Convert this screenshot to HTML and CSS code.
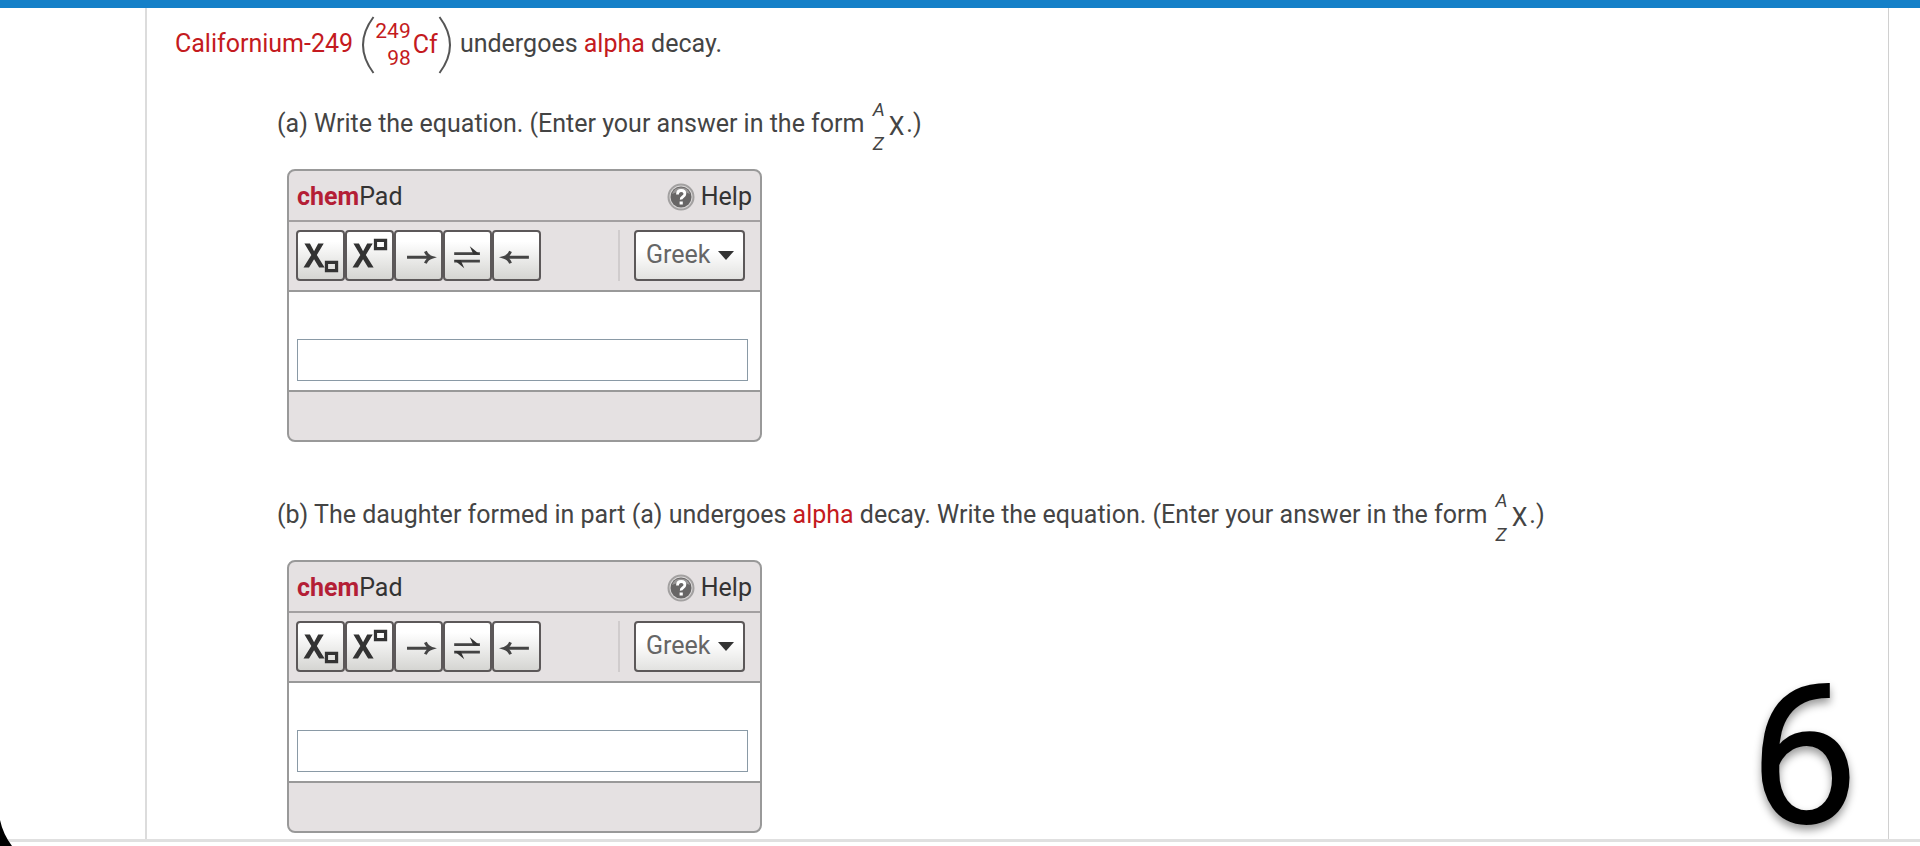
FILE: index.html
```html
<!DOCTYPE html>
<html lang="en">
<head>
    <meta charset="UTF-8">
    <meta name="viewport" content="width=device-width, initial-scale=1.0">
    <title>Californium-249 decay</title>
    <link rel="stylesheet" href="styles.css">
</head>
<body>
    <!-- Shared button icons -->
    <svg class="symbols" aria-hidden="true">
        <symbol id="icon-sub" viewBox="0 0 49 50">
            <path d="M7 12h6l4.500 8.500L22 12h6l-7.500 12.500L29 38h-6l-5.500-9-5.500 9H6l8.500-13.500z" />
            <path d="M31 32.500h11v9h-11z" fill="none" stroke="#333" stroke-width="3.500" />
        </symbol>
        <symbol id="icon-sup" viewBox="0 0 49 50">
            <path d="M7 12h6l4.500 8.500L22 12h6l-7.500 12.500L29 38h-6l-5.500-9-5.500 9H6l8.500-13.500z" />
            <path d="M31 8.500h11v9h-11z" fill="none" stroke="#333" stroke-width="3.500" />
        </symbol>
        <symbol id="icon-right" viewBox="0 0 49 50">
            <path d="M12 27h26M32 20.500q2 5 7 6.500q-5 1.500-7 6.500" fill="none" stroke="#444" stroke-width="3.200" />
        </symbol>
        <symbol id="icon-equil" viewBox="0 0 49 50">
            <path d="M10 23h28M10 31h28" fill="none" stroke="#444" stroke-width="3" />
            <path d="M27 15l11 9h-7zM21 39L10 30h7z" fill="#333" />
        </symbol>
        <symbol id="icon-left" viewBox="0 0 49 50">
            <path d="M38 27H12M18 20.500q-2 5-7 6.500q5 1.500 7 6.500" fill="none" stroke="#444" stroke-width="3.200" />
        </symbol>
        <symbol id="icon-help" viewBox="0 0 28 28">
            <circle cx="14" cy="14" r="12.500" fill="#d8d6d6" stroke="#a3a1a1" stroke-width="2" />
            <circle cx="14" cy="14" r="10.500" fill="#686666" />
            <path d="M5 11a9.500 9.500 0 0 1 18 0q-9-5-18 0z" fill="#999797" />
            <path d="M10.500 11.500q0-4 3.700-4t3.700 3.300q0 1.800-2 3t-1.700 2.700" fill="none" stroke="#fff" stroke-width="2.800" />
            <path d="M12.600 18.500h3.200v3h-3.200z" fill="#fff" />
        </symbol>
    </svg>

    <div class="top-bar"></div>

    <main class="page">
        <section class="question">
            <p class="intro"><span class="red">Californium-249</span>
                <span class="nuclide"><svg class="paren" viewBox="0 0 14 58"><path d="M12.500 1Q-8.500 29 12.500 57" /></svg><span class="stack red"><span>249</span><span>98</span></span><span class="red">Cf</span><svg class="paren" viewBox="0 0 14 58"><path d="M1.500 1Q22.500 29 1.500 57" /></svg></span>
                undergoes <span class="red">alpha</span> decay.</p>

            <div class="part">
                <p class="prompt">(a) Write the equation. (Enter your answer in the form <span class="nuclide"><span class="stack form"><i>A</i><i>Z</i></span><span class="element">X</span></span>.)</p>
                <div class="chempad">
                    <div class="pad-header">
                        <span><b>chem</b>Pad</span>
                        <a class="help" href="#"><svg><use href="#icon-help" /></svg>Help</a>
                    </div>
                    <div class="toolbar">
                        <div class="tools">
                            <button type="button" aria-label="Subscript"><svg><use href="#icon-sub" /></svg></button>
                            <button type="button" aria-label="Superscript"><svg><use href="#icon-sup" /></svg></button>
                            <button type="button" aria-label="Right arrow"><svg><use href="#icon-right" /></svg></button>
                            <button type="button" aria-label="Equilibrium"><svg><use href="#icon-equil" /></svg></button>
                            <button type="button" aria-label="Left arrow"><svg><use href="#icon-left" /></svg></button>
                        </div>
                        <div class="greek">
                            <select aria-label="Greek letters"><option>Greek</option></select>
                            <svg class="caret" viewBox="0 0 16 9"><path d="M0 0h16L8 9z" /></svg>
                        </div>
                    </div>
                    <div class="entry">
                        <input type="text" aria-label="Answer for part a">
                    </div>
                    <div class="pad-footer"></div>
                </div>
            </div>

            <div class="part">
                <p class="prompt">(b) The daughter formed in part (a) undergoes <span class="red">alpha</span> decay. Write the equation. (Enter your answer in the form <span class="nuclide"><span class="stack form"><i>A</i><i>Z</i></span><span class="element">X</span></span>.)</p>
                <div class="chempad">
                    <div class="pad-header">
                        <span><b>chem</b>Pad</span>
                        <a class="help" href="#"><svg><use href="#icon-help" /></svg>Help</a>
                    </div>
                    <div class="toolbar">
                        <div class="tools">
                            <button type="button" aria-label="Subscript"><svg><use href="#icon-sub" /></svg></button>
                            <button type="button" aria-label="Superscript"><svg><use href="#icon-sup" /></svg></button>
                            <button type="button" aria-label="Right arrow"><svg><use href="#icon-right" /></svg></button>
                            <button type="button" aria-label="Equilibrium"><svg><use href="#icon-equil" /></svg></button>
                            <button type="button" aria-label="Left arrow"><svg><use href="#icon-left" /></svg></button>
                        </div>
                        <div class="greek">
                            <select aria-label="Greek letters"><option>Greek</option></select>
                            <svg class="caret" viewBox="0 0 16 9"><path d="M0 0h16L8 9z" /></svg>
                        </div>
                    </div>
                    <div class="entry">
                        <input type="text" aria-label="Answer for part b">
                    </div>
                    <div class="pad-footer"></div>
                </div>
            </div>
        </section>
    </main>

    <div class="number">6</div>
    <svg class="corner" viewBox="0 0 12 26"><path d="M0 0Q3 14 12 26H0z" /></svg>
</body>
</html>
```
FILE: styles.css
```css
* {
    box-sizing: border-box;
}
body {
    margin: 0;
    background-color: #fff;
    color: #444;
    font-family: Roboto, Arial, sans-serif;
    font-size: 25px;
    line-height: 32px;
}
p {
    margin: 0;
}
.symbols {
    display: none;
}
.top-bar {
    height: 8px;
    background-color: #1580c8; /* Blue strip */
}
.page {
    padding: 0 31px 0 145px;
    border-bottom: 3px solid #e0e0e0;
}
.question {
    padding: 8px 28px 6px;
    border-left: 2px solid #dcdcdc;
    border-right: 1px solid #d0d0d0;
}
.red {
    color: #c41a20;
}

/* Element symbol with its mass and atomic numbers */
.nuclide {
    display: inline-flex;
    align-items: center;
    padding: 0 2px;
    vertical-align: middle;
}
.stack {
    display: flex;
    flex-direction: column;
    text-align: right;
    font-size: 21px;
    line-height: 27px;
    margin-right: 2px;
}
.form {
    padding-top: 4px;
    font-size: 19px;
    line-height: 34px;
    text-align: left;
    margin-right: 4px;
}
.element {
    padding-top: 4px;
}
.paren {
    width: 14px;
    height: 58px;
    fill: none;
    stroke: #555;
    stroke-width: 2;
}
.part {
    padding-left: 102px;
    margin-top: 15px;
}
.part + .part {
    margin-top: 38px;
}

/* chemPad */
.chempad {
    width: 475px;
    margin: 8px 0 0 10px;
    border: 2px solid #999;
    border-radius: 8px;
    background-color: #e5e1e2;
    overflow: hidden;
}
.pad-header {
    display: flex;
    align-items: center;
    justify-content: space-between;
    height: 49px;
    padding: 2px 8px 0;
    color: #333;
}
.pad-header b {
    color: #b41e36;
}
.help {
    display: flex;
    align-items: center;
    gap: 6px;
    color: #333;
    text-decoration: none;
}
.help svg {
    width: 28px;
    height: 28px;
}
.toolbar {
    display: flex;
    align-items: center;
    justify-content: space-between;
    height: 72px;
    padding: 0 15px 2px 7px;
    border-top: 2px solid #a3a0a1;
    border-bottom: 2px solid #999;
}
.tools {
    display: flex;
}
.tools button {
    width: 49px;
    height: 51px;
    padding: 0;
    border: 2px solid #5c5859;
    border-radius: 4px;
    background: linear-gradient(#fff 20%, #d5d5d2);
    cursor: pointer;
}
.tools svg {
    display: block;
    width: 45px;
    height: 47px;
    fill: #333;
}
.greek {
    position: relative;
    padding-left: 14px;
    border-left: 2px solid #d0cccd;
}
.greek select {
    display: block;
    appearance: none;
    width: 111px;
    height: 51px;
    padding: 0 0 2px 10px;
    border: 2px solid #5c5859;
    border-radius: 4px;
    background: linear-gradient(#fff 40%, #e2e2e0);
    color: #666;
    font: 25px Roboto, Arial, sans-serif;
}
.caret {
    position: absolute;
    right: 11px;
    top: 21px;
    width: 16px;
    height: 9px;
    fill: #333;
    pointer-events: none;
}
.entry {
    padding: 47px 12px 9px 8px;
    background-color: #fff;
    border-bottom: 2px solid #999;
}
.entry input {
    display: block;
    width: 100%;
    height: 42px;
    padding: 0 8px;
    border: 1px solid #8a9aa6;
    background-color: #fff;
    font: 25px Roboto, Arial, sans-serif;
}
.pad-footer {
    height: 48px;
}

/* Page number and screen corner over the page */
.number {
    position: absolute;
    right: 61px;
    bottom: 0;
    color: #000;
    font-size: 196px;
    line-height: 180px;
    text-shadow: 0 5px 8px rgba(0, 0, 0, 0.4);
}
.corner {
    position: absolute;
    left: 0;
    bottom: 0;
    width: 12px;
    height: 26px;
}
```
